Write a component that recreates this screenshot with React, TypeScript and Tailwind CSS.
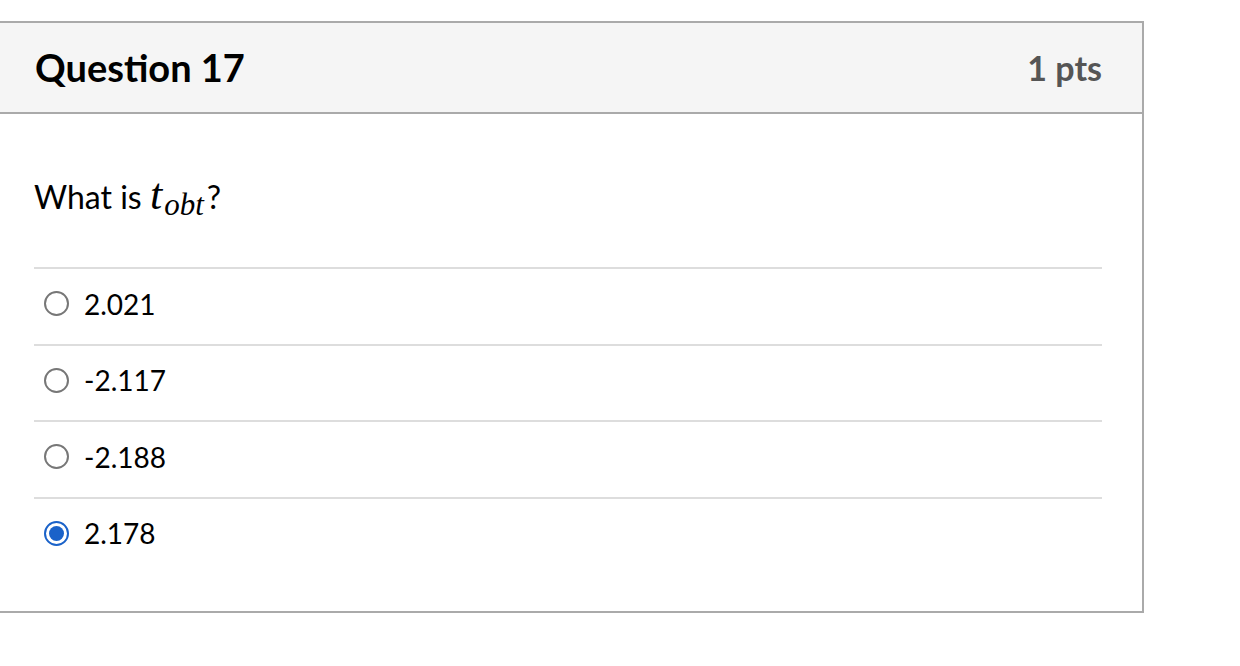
import React from "react";

const options = [
  { label: "2.021", selected: false },
  { label: "-2.117", selected: false },
  { label: "-2.188", selected: false },
  { label: "2.178", selected: true },
];

function Radio({ selected }: { selected: boolean }) {
  return selected ? (
    <span className="flex h-[25px] w-[25px] shrink-0 items-center justify-center rounded-full border-[2.5px] border-[#1a62c9] bg-white">
      <span className="h-[15px] w-[15px] rounded-full bg-[#1a62c9]" />
    </span>
  ) : (
    <span className="h-[25px] w-[25px] shrink-0 rounded-full border-2 border-[#777] bg-white" />
  );
}

export default function App() {
  return (
    <div className="min-h-[666px] bg-white pt-[21px]">
      <div className="w-[1144px] border-y-2 border-r-2 border-[#aaaaaa]">
        <div className="flex h-[91px] items-center justify-between border-b-2 border-[#aaaaaa] bg-[#f5f5f5] pl-[35px] pr-[40px] font-['Lato']">
          <span className="text-[38px] font-bold text-black">Question 17</span>
          <span className="text-[34px] font-bold text-[#555555]">1 pts</span>
        </div>
        <div className="pb-[38px] pl-[34px] pr-[40px] pt-[59px]">
          <div className="flex items-baseline text-[32px] leading-[48px] text-black">
            <span className="font-['Lato']">What is&nbsp;</span>
            <span className="inline-block font-['Liberation_Serif',serif] italic leading-none">
              <span className="text-[44px]">t</span>
              <span className="relative top-[6px] ml-[2px] text-[31px]">obt</span>
            </span>
            <span className="ml-[3px] font-['Lato']">?</span>
          </div>
          <div className="mt-[46px] font-['Lato']">
            {options.map((o, i) => (
              <div key={i} className="flex h-[76.5px] items-center gap-[15px] border-t-2 border-[#dddddd] pb-[5px] pl-[10px]">
                <Radio selected={o.selected} />
                <span className="text-[28px] text-black">{o.label}</span>
              </div>
            ))}
          </div>
        </div>
      </div>
    </div>
  );
}
